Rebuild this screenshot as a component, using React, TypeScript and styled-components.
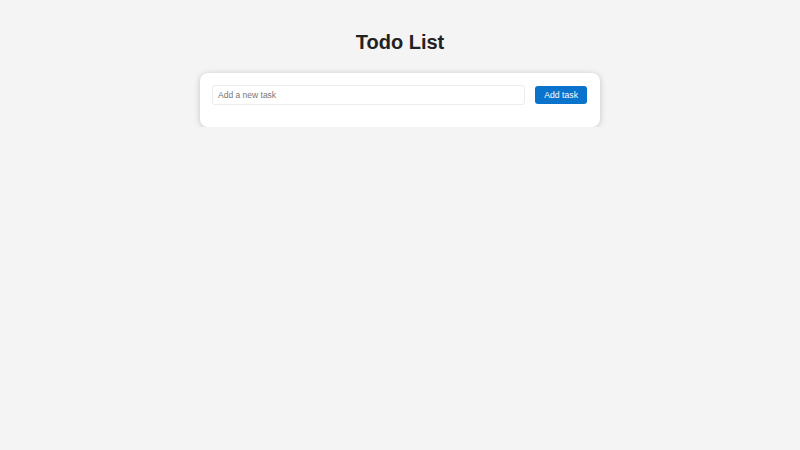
import React, { useState } from "react";
import styled, { createGlobalStyle } from "styled-components";

const GlobalStyle = createGlobalStyle`
  html, body {
    margin: 0;
    padding: 0;
    background-color: #f4f4f4;
    font-family: "Liberation Sans", Arial, sans-serif;
  }
`;

const Page = styled.div`
  display: flex;
  flex-direction: column;
  align-items: center;
  padding-top: 31px;
`;

const Title = styled.h1`
  margin: 0 0 20px;
  font-size: 20px;
  line-height: 22px;
  font-weight: bold;
  color: #222;
`;

const Card = styled.div`
  width: 400px;
  box-sizing: border-box;
  padding: 12px 13px 12px 12px;
  background-color: #fff;
  border-radius: 8px;
  box-shadow: 0 1px 6px rgba(0, 0, 0, 0.2);
`;

const Form = styled.form`
  display: flex;
  align-items: center;
  gap: 10px;
  margin-bottom: 10px;
`;

const Input = styled.input`
  flex: 1;
  height: 20px;
  box-sizing: border-box;
  padding: 0 5px;
  border: 1px solid #ececec;
  border-radius: 3px;
  font-family: inherit;
  font-size: 8.5px;
  color: #333;
  outline: none;

  &::placeholder {
    color: #777;
  }
`;

const Button = styled.button`
  height: 18px;
  padding: 0 9px;
  border: none;
  border-radius: 3px;
  background-color: #0a73cc;
  color: #fff;
  font-family: inherit;
  font-size: 8.7px;
  cursor: pointer;
`;

const TaskList = styled.ul`
  list-style: none;
  margin: 0;
  padding: 0;
`;

const TaskItem = styled.li`
  font-size: 10px;
  padding: 4px 0;
  color: #333;
`;

export default function App() {
  const [text, setText] = useState("");
  const [tasks, setTasks] = useState<string[]>([]);

  const addTask = (e: React.FormEvent) => {
    e.preventDefault();
    if (!text.trim()) return;
    setTasks([...tasks, text.trim()]);
    setText("");
  };

  return (
    <>
      <GlobalStyle />
      <Page>
        <Title>Todo List</Title>
        <Card>
          <Form onSubmit={addTask}>
            <Input
              placeholder="Add a new task"
              value={text}
              onChange={(e) => setText(e.target.value)}
            />
            <Button type="submit">Add task</Button>
          </Form>
          <TaskList>
            {tasks.map((t, i) => (
              <TaskItem key={i}>{t}</TaskItem>
            ))}
          </TaskList>
        </Card>
      </Page>
    </>
  );
}
